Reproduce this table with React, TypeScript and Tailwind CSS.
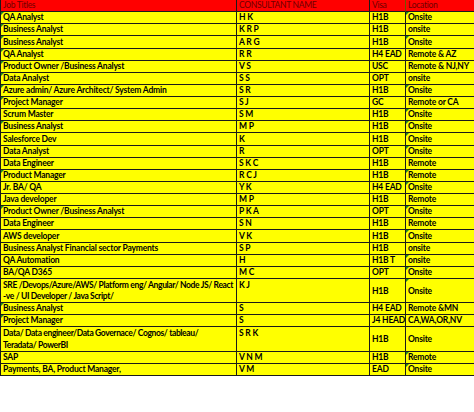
import React from "react";

type Row = {
  title: string[];
  name: string;
  visa: string;
  location: string;
  tall?: boolean;
  markA?: boolean;
  markD?: boolean;
};

const rows: Row[] = [
  { title: ["QA Analyst"], name: "H K", visa: "H1B", location: "Onsite", markA: true, markD: true },
  { title: ["Business Analyst"], name: "K R P", visa: "H1B", location: "onsite", markA: true },
  { title: ["Business Analyst"], name: "A R G", visa: "H1B", location: "Onsite", markA: true, markD: true },
  { title: ["QA Analyst"], name: "R R", visa: "H4 EAD", location: "Remote & AZ", markA: true },
  { title: ["Product Owner /Business Analyst"], name: "V S", visa: "USC", location: "Remote & NJ,NY", markA: true },
  { title: ["Data Analyst"], name: "S S", visa: "OPT", location: "onsite", markA: true },
  { title: ["Azure admin/ Azure Architect/ System Admin"], name: "S R", visa: "H1B", location: "Onsite", markA: true, markD: true },
  { title: ["Project Manager"], name: "S J", visa: "GC", location: "Remote or CA", markA: true },
  { title: ["Scrum Master"], name: "S M", visa: "H1B", location: "Onsite", markD: true },
  { title: ["Business Analyst"], name: "M P", visa: "H1B", location: "Onsite", markA: true, markD: true },
  { title: ["Salesforce Dev"], name: "K", visa: "H1B", location: "Onsite", markD: true },
  { title: ["Data Analyst"], name: "R", visa: "OPT", location: "Onsite", markD: true },
  { title: ["Data Engineer"], name: "S K C", visa: "H1B", location: "Remote" },
  { title: ["Product Manager"], name: "R C J", visa: "H1B", location: "Remote", markA: true, markD: true },
  { title: ["Jr. BA/ QA"], name: "Y K", visa: "H4 EAD", location: "Onsite", markD: true },
  { title: ["Java developer"], name: "M P", visa: "H1B", location: "Remote" },
  { title: ["Product Owner /Business Analyst"], name: "P K A", visa: "OPT", location: "Onsite", markA: true, markD: true },
  { title: ["Data Engineer"], name: "S N", visa: "H1B", location: "Remote" },
  { title: ["AWS developer"], name: "V K", visa: "H1B", location: "Onsite", markD: true },
  { title: ["Business Analyst Financial sector Payments"], name: "S P", visa: "H1B", location: "onsite" },
  { title: ["QA Automation"], name: "H", visa: "H1B T", location: "onsite", markD: true },
  { title: ["BA/QA D365"], name: "M C", visa: "OPT", location: "Onsite", markD: true },
  {
    title: ["SRE /Devops/Azure/AWS/ Platform eng/ Angular/ Node JS/ React", "-ve / UI Developer / Java Script/"],
    name: "K J",
    visa: "H1B",
    location: "Onsite",
    tall: true,
    markD: true,
  },
  { title: ["Business Analyst"], name: "S", visa: "H4 EAD", location: "Remote &MN", markA: true },
  { title: ["Project Manager"], name: "S", visa: "J4 HEAD", location: "CA,WA,OR,NV", markA: true },
  {
    title: ["Data/ Data engineer/Data Governace/ Cognos/ tableau/", "Teradata/ PowerBI"],
    name: "S R K",
    visa: "H1B",
    location: "Onsite",
    tall: true,
  },
  { title: ["SAP"], name: "V N M", visa: "H1B", location: "Remote", markD: true },
  { title: ["Payments, BA, Product Manager,"], name: "V M", visa: "EAD", location: "Onsite", markD: true },
];

function Mark() {
  return (
    <span className="absolute left-0 top-0 h-0 w-0 border-t-[3px] border-r-[3px] border-t-[#1e8a1e] border-r-transparent" />
  );
}

const head = "flex h-[12.13px] items-end border-b border-[#1a1a1a] bg-[#ff0000] px-[2px] pb-[1px] font-normal tracking-[-0.3px] text-[#6e0000]";

export default function App() {
  return (
    <div
      className="h-[412px] w-[474px] overflow-hidden bg-white text-[8.5px] font-bold leading-[10px] tracking-[-0.2px] text-black"
      style={{ fontFamily: "Lato, 'Liberation Sans', sans-serif" }}
    >
      <div className="grid w-[480px] grid-cols-[236px_133px_36px_75px] border-l border-[#1a1a1a]">
        <div className={`${head} border-r`}>Job Titles</div>
        <div className={`${head} border-r`}>CONSULTANT NAME</div>
        <div className={`${head} border-r border-r-[#6b5a00]`}>Visa</div>
        <div className={head}>Location</div>

        {rows.map((r, i) => {
          const h = r.tall ? "h-[24.26px]" : "h-[12.13px]";
          return (
            <React.Fragment key={i}>
              <div className={`relative flex flex-col border-b border-r border-[#1a1a1a] bg-[#ffff00] px-[2px] ${h} ${r.tall ? "justify-start pt-[1px] leading-[11.5px] tracking-[-0.36px]" : "justify-end pb-[1px]"}`}>
                {r.markA && <Mark />}
                {r.title.map((t, j) => (
                  <span key={j} className="whitespace-nowrap">
                    {t}
                  </span>
                ))}
              </div>
              <div className={`flex border-b border-r border-[#1a1a1a] bg-[#ffff00] px-[2px] ${h} ${r.tall ? "items-start pt-[1px]" : "items-end pb-[1px]"}`}>
                {r.name}
              </div>
              <div className={`flex border-b border-r border-[#1a1a1a] bg-[#ffff00] px-[2px] ${h} ${r.tall ? "items-center" : "items-end pb-[1px]"}`}>
                <span className="whitespace-nowrap">{r.visa}</span>
              </div>
              <div className={`relative flex border-b border-[#1a1a1a] bg-[#ffff00] px-[2px] ${h} ${r.tall ? "items-center" : "items-end pb-[1px]"}`}>
                {r.markD && <Mark />}
                <span className="whitespace-nowrap">{r.location}</span>
              </div>
            </React.Fragment>
          );
        })}
      </div>
    </div>
  );
}
